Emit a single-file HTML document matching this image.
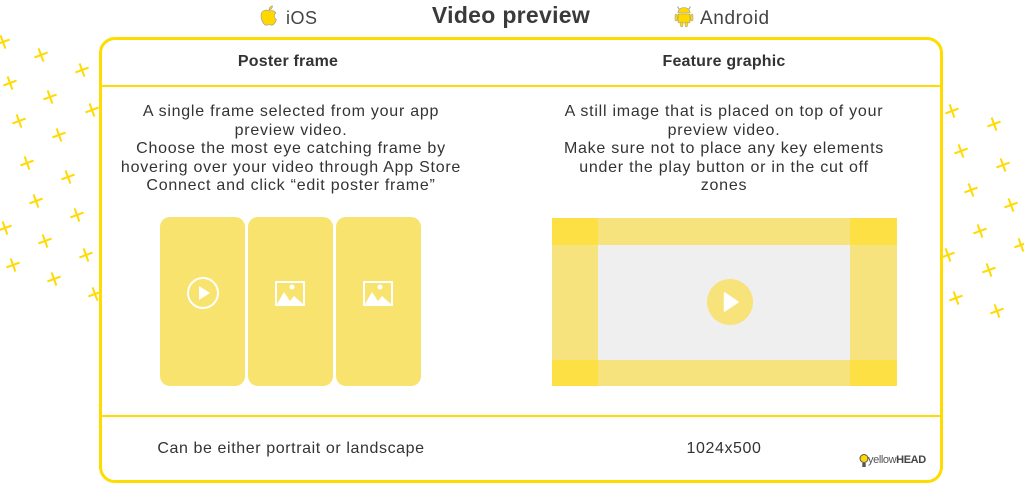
<!DOCTYPE html>
<html><head><meta charset="utf-8"><style>
*{margin:0;padding:0;box-sizing:border-box}
body{width:1024px;height:484px;background:#fff;position:relative;overflow:hidden;font-family:"Liberation Sans",sans-serif;color:#3a3a3a}
.a{position:absolute}
.box{left:99px;top:37px;width:844px;height:446px;border:3px solid #ffdc00;border-radius:16px}
.hl{height:2px;background:#ffdc00;left:101px;width:840px}
.t{text-align:center;white-space:nowrap}
.body{font-size:16px;line-height:18.6px;letter-spacing:0.75px;color:#333}
.fr{background:#f7e36e;border-radius:10px;top:217px;width:85px;height:169px}
.x{width:14px;height:14px;transform:rotate(-20deg)}
.x:before,.x:after{content:"";position:absolute;background:#ffd900}
.x:before{left:6px;top:0;width:2px;height:14px}
.x:after{top:6px;left:0;height:2px;width:14px}
</style></head><body>

<div class="a x" style="left:-4px;top:35px"></div>
<div class="a x" style="left:34px;top:48px"></div>
<div class="a x" style="left:75px;top:63px"></div>
<div class="a x" style="left:3px;top:76px"></div>
<div class="a x" style="left:43px;top:90px"></div>
<div class="a x" style="left:85px;top:103px"></div>
<div class="a x" style="left:12px;top:114px"></div>
<div class="a x" style="left:52px;top:128px"></div>
<div class="a x" style="left:20px;top:156px"></div>
<div class="a x" style="left:61px;top:170px"></div>
<div class="a x" style="left:29px;top:194px"></div>
<div class="a x" style="left:70px;top:208px"></div>
<div class="a x" style="left:-2px;top:221px"></div>
<div class="a x" style="left:38px;top:234px"></div>
<div class="a x" style="left:79px;top:248px"></div>
<div class="a x" style="left:6px;top:258px"></div>
<div class="a x" style="left:47px;top:272px"></div>
<div class="a x" style="left:88px;top:287px"></div>

<div class="a x" style="left:945px;top:104px"></div>
<div class="a x" style="left:987px;top:117px"></div>
<div class="a x" style="left:954px;top:144px"></div>
<div class="a x" style="left:996px;top:158px"></div>
<div class="a x" style="left:964px;top:183px"></div>
<div class="a x" style="left:1004px;top:198px"></div>
<div class="a x" style="left:973px;top:224px"></div>
<div class="a x" style="left:1014px;top:238px"></div>
<div class="a x" style="left:941px;top:248px"></div>
<div class="a x" style="left:982px;top:263px"></div>
<div class="a x" style="left:949px;top:291px"></div>
<div class="a x" style="left:990px;top:304px"></div>

<svg class="a" style="left:259px;top:5px" width="20" height="22" viewBox="0 0 20 22"><path d="M10 6C8 4.5 4 4.8 2.5 8 1 11.5 3 17 5.5 19.5 7 21 8.5 20 10 19.5 11.5 20 13 21 14.5 19.5 16 18 17 16 17.5 14.5 15 13.5 14.5 9.5 17 8 15.5 5.5 12 5 10 6Z" fill="#ffd800" stroke="#999" stroke-width=".6"/><path d="M10 5C10 3 11.5 1 13.5 .8 13.5 3 12 4.8 10 5Z" fill="#ffd800" stroke="#999" stroke-width=".6"/></svg>
<div class="a" style="left:286px;top:8px;font-size:18px;letter-spacing:0.5px;color:#444">iOS</div>
<div class="a t" style="left:381px;top:2px;width:260px;font-size:23px;font-weight:bold;letter-spacing:0.3px;color:#3a3a3a">Video preview</div>
<svg class="a" style="left:674px;top:4px" width="20" height="24" viewBox="0 0 20 24"><path d="M5 5L3.5 2.5M15 5L16.5 2.5" stroke="#999" stroke-width="1"/><path d="M4 9C4 5 7 3.5 10 3.5S16 5 16 9Z" fill="#ffd800" stroke="#999" stroke-width=".6"/><rect x="4" y="10" width="12" height="9" rx="1.5" fill="#ffd800" stroke="#999" stroke-width=".6"/><rect x="1" y="10" width="2.4" height="7" rx="1.2" fill="#ffd800" stroke="#999" stroke-width=".5"/><rect x="16.6" y="10" width="2.4" height="7" rx="1.2" fill="#ffd800" stroke="#999" stroke-width=".5"/><rect x="6.5" y="18" width="2.4" height="5" rx="1.2" fill="#ffd800" stroke="#999" stroke-width=".5"/><rect x="11.1" y="18" width="2.4" height="5" rx="1.2" fill="#ffd800" stroke="#999" stroke-width=".5"/></svg>
<div class="a" style="left:700px;top:8px;font-size:19px;letter-spacing:0.6px;color:#444">Android</div>

<div class="a box"></div>
<div class="a hl" style="top:85px"></div>
<div class="a hl" style="top:415px"></div>

<div class="a t" style="left:188px;top:53px;width:200px;font-size:16px;font-weight:bold;letter-spacing:0.2px;color:#333">Poster frame</div>
<div class="a t" style="left:624px;top:53px;width:200px;font-size:16px;font-weight:bold;letter-spacing:0.2px;color:#333">Feature graphic</div>

<div class="a t body" style="left:81px;top:103px;width:420px">A single frame selected from your app<br>preview video.<br>Choose the most eye catching frame by<br>hovering over your video through App Store<br>Connect and click “edit poster frame”</div>
<div class="a t body" style="left:514px;top:103px;width:420px">A still image that is placed on top of your<br>preview video.<br>Make sure not to place any key elements<br>under the play button or in the cut off<br>zones</div>

<div class="a fr" style="left:160px"></div>
<div class="a fr" style="left:248px"></div>
<div class="a fr" style="left:336px"></div>
<svg class="a" style="left:186px;top:276px" width="34" height="34" viewBox="0 0 34 34"><circle cx="17" cy="17" r="15" fill="none" stroke="#fff" stroke-width="2"/><path d="M13 10L24 17 13 24Z" fill="#fff"/></svg>
<svg class="a" style="left:275px;top:281px" width="30" height="25" viewBox="0 0 30 25"><rect x="1" y="1" width="28" height="23" fill="none" stroke="#fff" stroke-width="2"/><circle cx="17" cy="6" r="2.5" fill="#fff"/><path d="M2 23L9 11 15 20 19 15 28 23Z" fill="#fff"/></svg>
<svg class="a" style="left:363px;top:281px" width="30" height="25" viewBox="0 0 30 25"><rect x="1" y="1" width="28" height="23" fill="none" stroke="#fff" stroke-width="2"/><circle cx="17" cy="6" r="2.5" fill="#fff"/><path d="M2 23L9 11 15 20 19 15 28 23Z" fill="#fff"/></svg>

<div class="a" style="left:552px;top:218px;width:345px;height:168px;background:#f7e37e"></div>
<div class="a" style="left:598px;top:245px;width:252px;height:115px;background:#efefef"></div>
<div class="a" style="left:552px;top:218px;width:46px;height:27px;background:#fce044"></div>
<div class="a" style="left:850px;top:218px;width:47px;height:27px;background:#fce044"></div>
<div class="a" style="left:552px;top:360px;width:46px;height:26px;background:#fce044"></div>
<div class="a" style="left:850px;top:360px;width:47px;height:26px;background:#fce044"></div>
<svg class="a" style="left:707px;top:279px" width="46" height="46" viewBox="0 0 46 46"><circle cx="23" cy="23" r="23" fill="#f7e37a"/><path d="M17.5 14L31 23 17.5 32Z" fill="#fff" stroke="#fff" stroke-width="1.5" stroke-linejoin="round"/></svg>

<div class="a t" style="left:81px;top:440px;width:420px;font-size:16px;letter-spacing:0.6px;color:#333">Can be either portrait or landscape</div>
<div class="a t" style="left:624px;top:440px;width:200px;font-size:16px;letter-spacing:0.6px;color:#333">1024x500</div>

<svg class="a" style="left:859px;top:453px" width="10" height="16" viewBox="0 0 10 16"><circle cx="5" cy="5.5" r="4" fill="#ffd800" stroke="#555" stroke-width="1"/><rect x="3.3" y="10" width="3.4" height="4" fill="#555"/></svg>
<div class="a" style="left:868px;top:454px;font-size:11px;letter-spacing:-0.4px;color:#555">yellow<b style="color:#444">HEAD</b></div>
</body></html>
